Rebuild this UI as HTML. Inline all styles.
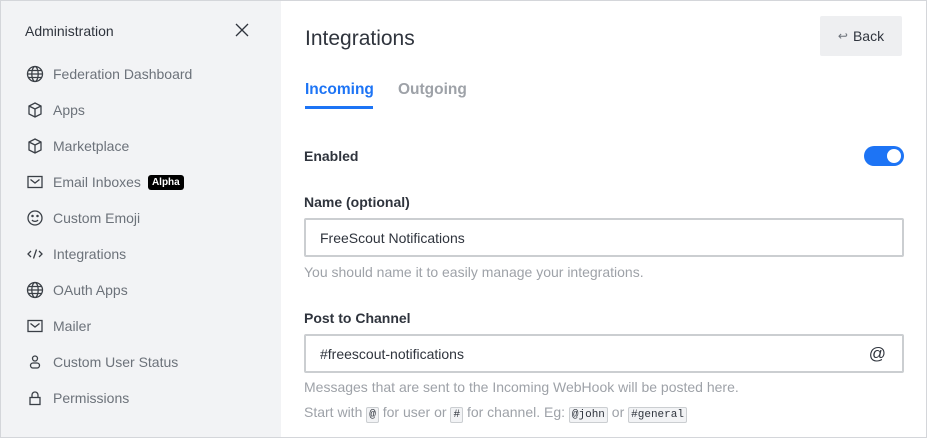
<!DOCTYPE html>
<html><head><meta charset="utf-8"><style>
*{box-sizing:border-box;margin:0;padding:0}
body{width:927px;height:438px;overflow:hidden;font-family:"Liberation Sans",sans-serif;background:#fff;position:relative}
.frame{position:absolute;inset:0;border:1px solid #d4d6da;pointer-events:none;z-index:9}
.side{position:absolute;left:0;top:0;width:281px;height:438px;background:#f2f3f5}
.side .hd{position:absolute;left:25px;top:23px;font-size:14px;color:#2f343d}
.side .x{position:absolute;left:234px;top:22px}
.it{position:absolute;left:25px;height:20px;display:flex;align-items:center;font-size:14px;color:#6c727a}
.it svg{width:20px;height:20px;margin-right:8px;flex:none}
.badge{background:#000;color:#fff;font-size:10px;font-weight:bold;padding:2px 4px;border-radius:3px;margin-left:7px}
.abs{position:absolute}
h1{position:absolute;left:305px;top:27px;font-size:21px;font-weight:normal;color:#2f343d}
.back{position:absolute;left:820px;top:16px;width:82px;height:40px;background:#eeeff1;border-radius:2px;font-size:14px;color:#2f343d;display:flex;align-items:center;justify-content:center}
.tab{position:absolute;top:81px;font-size:15.5px;font-weight:bold}
.lbl{position:absolute;left:304px;font-size:14px;font-weight:bold;color:#2f343d}
.inp{position:absolute;left:304px;width:600px;height:39px;border:2px solid #cbced1;border-radius:2px;font-size:14px;color:#2f343d;padding-left:14px;display:flex;align-items:center}
.hint{position:absolute;left:304px;font-size:14px;color:#9ea2a8}
code{font-family:"Liberation Mono",monospace;font-size:11px;color:#2f343d;background:#f2f3f5;border:1px solid #cbced1;padding:1px 2px;border-radius:2px}
</style></head><body>
<div class="frame"></div>
<div class="side">
<div class="hd">Administration</div>
<svg class="x" width="16" height="16" viewBox="0 0 16 16" stroke="#2f343d" stroke-width="1.3"><path d="M2 2L14 14M14 2L2 14"/></svg>
</div>
<div class="it" style="top:64px"><svg viewBox="0 0 20 20" fill="none" stroke="#3a3f46" stroke-width="1.3"><circle cx="10" cy="10" r="7.5"/><ellipse cx="10" cy="10" rx="3.2" ry="7.5"/><path d="M2.5 10h15M3.5 6.5h13M3.5 13.5h13"/></svg>Federation Dashboard</div>
<div class="it" style="top:100px"><svg viewBox="0 0 20 20" fill="none" stroke="#3a3f46" stroke-width="1.3"><path d="M10 3l6 3v8l-6 3-6-3V6z M4 6l6 3 6-3 M10 9v8"/></svg>Apps</div>
<div class="it" style="top:136px"><svg viewBox="0 0 20 20" fill="none" stroke="#3a3f46" stroke-width="1.3"><path d="M10 3l6 3v8l-6 3-6-3V6z M4 6l6 3 6-3 M10 9v8"/></svg>Marketplace</div>
<div class="it" style="top:172px"><svg viewBox="0 0 20 20" fill="none" stroke="#3a3f46" stroke-width="1.3"><rect x="3" y="4.5" width="14" height="11"/><path d="M5.5 7.5l4.5 3.5 4.5-3.5"/></svg>Email Inboxes<span class="badge">Alpha</span></div>
<div class="it" style="top:208px"><svg viewBox="0 0 20 20" fill="none" stroke="#3a3f46" stroke-width="1.3"><circle cx="10" cy="10" r="7"/><path d="M7 12c1.5 1.8 4.5 1.8 6 0"/><circle cx="7.5" cy="8" r=".6" fill="#3a3f46"/><circle cx="12.5" cy="8" r=".6" fill="#3a3f46"/></svg>Custom Emoji</div>
<div class="it" style="top:244px"><svg viewBox="0 0 20 20" fill="none" stroke="#3a3f46" stroke-width="1.3"><path d="M6 7l-3 3 3 3M14 7l3 3-3 3M11.5 5.5l-3 9"/></svg>Integrations</div>
<div class="it" style="top:280px"><svg viewBox="0 0 20 20" fill="none" stroke="#3a3f46" stroke-width="1.3"><circle cx="10" cy="10" r="7.5"/><ellipse cx="10" cy="10" rx="3.2" ry="7.5"/><path d="M2.5 10h15M3.5 6.5h13M3.5 13.5h13"/></svg>OAuth Apps</div>
<div class="it" style="top:316px"><svg viewBox="0 0 20 20" fill="none" stroke="#3a3f46" stroke-width="1.3"><rect x="3" y="4.5" width="14" height="11"/><path d="M5.5 7.5l4.5 3.5 4.5-3.5"/></svg>Mailer</div>
<div class="it" style="top:352px"><svg viewBox="0 0 20 20" fill="none" stroke="#3a3f46" stroke-width="1.3"><circle cx="10" cy="6.5" r="2.5"/><rect x="5.5" y="11" width="9" height="5" rx="2.5"/></svg>Custom User Status</div>
<div class="it" style="top:388px"><svg viewBox="0 0 20 20" fill="none" stroke="#3a3f46" stroke-width="1.3"><rect x="5" y="9.5" width="10" height="7"/><path d="M7 9.5V7a3 3 0 0 1 6 0v2.5"/></svg>Permissions</div>

<h1>Integrations</h1>
<div class="back"><span style="color:#6c727a;font-size:12px;margin-right:5px">↩</span>Back</div>
<div class="tab" style="left:305px;color:#1d74f5">Incoming</div>
<div class="abs" style="left:305px;top:106px;width:68px;height:3px;background:#1d74f5"></div>
<div class="tab" style="left:398px;color:#9ea2a8">Outgoing</div>
<div class="lbl" style="top:148px">Enabled</div>
<div class="abs" style="left:864px;top:146px;width:40px;height:20px;border-radius:10px;background:#1d74f5"><div class="abs" style="right:3px;top:3px;width:14px;height:14px;border-radius:7px;background:#fff"></div></div>
<div class="lbl" style="top:194px">Name (optional)</div>
<div class="inp" style="top:218px">FreeScout Notifications</div>
<div class="hint" style="top:264px">You should name it to easily manage your integrations.</div>
<div class="lbl" style="top:310px">Post to Channel</div>
<div class="inp" style="top:334px">#freescout-notifications<span style="position:absolute;right:16px;font-size:17px">@</span></div>
<div class="hint" style="top:379px">Messages that are sent to the Incoming WebHook will be posted here.</div>
<div class="hint" style="top:404px">Start with <code>@</code> for user or <code>#</code> for channel. Eg: <code>@john</code> or <code>#general</code></div>
</body></html>
